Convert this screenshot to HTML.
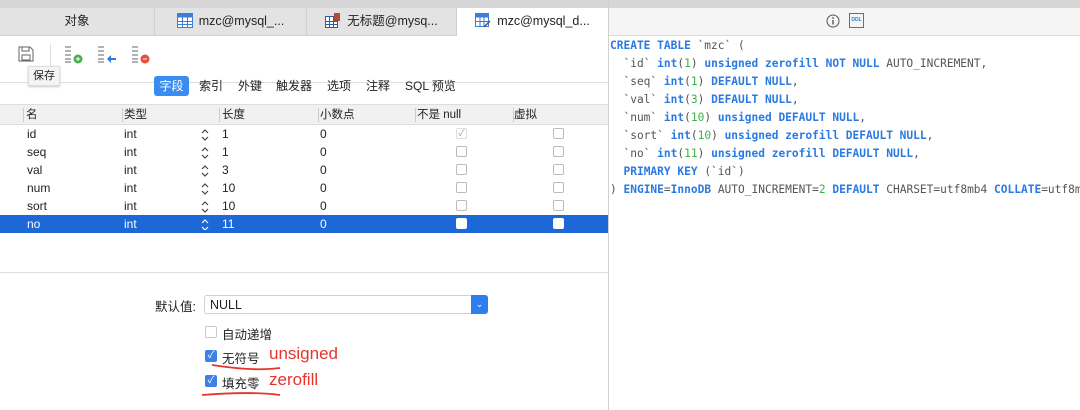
<!DOCTYPE html>
<html><head><meta charset="utf-8"><style>
*{margin:0;padding:0;box-sizing:border-box}
body{width:1080px;height:410px;overflow:hidden;background:#fff;font-family:"Liberation Sans","Noto Sans CJK SC",sans-serif;font-size:12px;color:#222;position:relative}
.abs{position:absolute}
.tab{position:absolute;top:8px;height:28px;background:#e3e3e3;border-right:1px solid #cfcfcf;border-bottom:1px solid #cfcfcf;font-size:12.5px;line-height:27px;text-align:center;color:#222}
.row{position:absolute;left:0;width:608px;height:18px;font-size:12px;line-height:18px}
.row span{position:absolute}
.cb{position:absolute;width:11px;height:11px;border:1px solid #bbb;border-radius:2px;background:#fff}
.code{position:absolute;left:610px;width:470px;overflow:hidden;font-family:"DejaVu Sans Mono",monospace;font-size:11.2px;white-space:pre;color:#555;line-height:18px}
.k{color:#2a7ae2;font-weight:bold}.n{color:#3cb34a}
</style></head><body>
<div class="abs" style="left:0;top:0;width:1080px;height:8px;background:#d6d6d6"></div>
<div class="tab" style="left:0;width:155px">对象</div>
<div class="tab" style="left:155px;width:152px"><svg style="vertical-align:-3px;margin-right:6px" width="16" height="15"><rect x="0.5" y="0.5" width="15" height="14" fill="#fff" stroke="#3b7fd6"/><rect x="0.5" y="0.5" width="15" height="4" fill="#3b7fd6"/><path d="M5.5 4v11M10.5 4v11M0 8.5h16M0 11.5h16" stroke="#3b7fd6"/></svg>mzc@mysql_...</div>
<div class="tab" style="left:307px;width:150px"><svg style="vertical-align:-3px;margin-right:6px" width="16" height="15"><rect x="0.5" y="3.5" width="12" height="11" fill="#fff" stroke="#2b5e9c"/><rect x="9" y="0" width="6" height="8" fill="#b04a3a"/><path d="M4.5 4v11M8.5 4v11M0 8.5h13M0 11.5h13" stroke="#2b5e9c"/></svg>无标题@mysq...</div>
<div class="abs" style="left:457px;top:8px;width:151px;height:28px;background:#fff;font-size:12.5px;line-height:27px;text-align:center"><svg style="vertical-align:-3px;margin-right:6px" width="16" height="15"><rect x="0.5" y="0.5" width="13" height="13" fill="#fff" stroke="#3b7fd6"/><rect x="0.5" y="0.5" width="13" height="4" fill="#3b7fd6"/><path d="M5 4v10M9 4v10M0 8.5h14" stroke="#3b7fd6"/><path d="M9 14l6-6" stroke="#555" stroke-width="1.5"/></svg>mzc@mysql_d...</div>
<div class="abs" style="left:608px;top:0;width:1px;height:410px;background:#d0d0d0"></div>
<div class="abs" style="left:609px;top:8px;width:471px;height:28px;background:#f5f5f5;border-bottom:1px solid #ddd"></div>
<svg class="abs" style="left:826px;top:14px" width="14" height="14"><circle cx="7" cy="7" r="6" fill="none" stroke="#555"/><path d="M7 6v4.5" stroke="#555" stroke-width="1.4"/><circle cx="7" cy="4" r="0.9" fill="#555"/></svg>
<div class="abs" style="left:849px;top:13px;width:15px;height:15px;border:1.5px solid #2a7ae2;font-size:5px;color:#2a7ae2;text-align:center;line-height:12px;font-weight:bold">DDL</div>
<svg class="abs" style="left:18px;top:46px" width="16" height="16"><path d="M1 1h11l3 3v11H1z" fill="#fff" stroke="#666"/><rect x="4" y="1" width="7" height="4" fill="none" stroke="#666"/><rect x="4" y="9" width="8" height="5" fill="none" stroke="#666"/></svg>
<div class="abs" style="left:50px;top:44px;width:1px;height:22px;background:#ddd"></div>
<svg class="abs" style="left:65px;top:46px" width="22" height="18"><path d="M0 1h6M0 5h6M0 9h6M0 13h6M0 16h6" stroke="#999" stroke-width="1.5"/><circle cx="13" cy="13" r="4.5" fill="#4caf50"/><path d="M11 13h4M13 11v4" stroke="#fff"/></svg>
<svg class="abs" style="left:98px;top:46px" width="22" height="18"><path d="M0 1h6M0 5h6M0 9h6M0 13h6M0 16h6" stroke="#999" stroke-width="1.5"/><path d="M9 13l4-4v3h5v2h-5v3z" fill="#2a7ae2"/></svg>
<svg class="abs" style="left:132px;top:46px" width="22" height="18"><path d="M0 1h6M0 5h6M0 9h6M0 13h6M0 16h6" stroke="#999" stroke-width="1.5"/><circle cx="13" cy="13" r="4.5" fill="#e74c3c"/><path d="M11 13h4" stroke="#fff"/></svg>
<div class="abs" style="left:0;top:82px;width:608px;height:1px;background:#ddd"></div>
<div class="abs" style="left:28px;top:66px;width:32px;height:20px;background:#f4f4f4;border:1px solid #ddd;box-shadow:0 1px 2px #ccc;font-size:11px;line-height:18px;text-align:center">保存</div>
<div class="abs" style="left:154px;top:76px;width:35px;height:20px;background:#3b8cf0;color:#fff;border-radius:3px;font-size:12px;line-height:20px;text-align:center">字段</div>
<div class="abs" style="left:199px;top:76px;font-size:12px;line-height:20px">索引</div>
<div class="abs" style="left:238px;top:76px;font-size:12px;line-height:20px">外键</div>
<div class="abs" style="left:276px;top:76px;font-size:12px;line-height:20px">触发器</div>
<div class="abs" style="left:327px;top:76px;font-size:12px;line-height:20px">选项</div>
<div class="abs" style="left:366px;top:76px;font-size:12px;line-height:20px">注释</div>
<div class="abs" style="left:405px;top:76px;font-size:12px;line-height:20px">SQL 预览</div>
<div class="abs" style="left:0;top:104px;width:608px;height:21px;background:#f1f1f1;border-top:1px solid #ddd;border-bottom:1px solid #ddd"></div>
<div class="row" style="top:106px;font-size:11.5px"><span style="left:26px">名</span><span style="left:124px">类型</span><span style="left:222px">长度</span><span style="left:320px">小数点</span><span style="left:417px">不是 null</span><span style="left:514px">虚拟</span></div>
<div class="abs" style="left:23px;top:108px;width:1px;height:14px;background:#ccc"></div>
<div class="abs" style="left:122px;top:108px;width:1px;height:14px;background:#ccc"></div>
<div class="abs" style="left:219px;top:108px;width:1px;height:14px;background:#ccc"></div>
<div class="abs" style="left:318px;top:108px;width:1px;height:14px;background:#ccc"></div>
<div class="abs" style="left:415px;top:108px;width:1px;height:14px;background:#ccc"></div>
<div class="abs" style="left:513px;top:108px;width:1px;height:14px;background:#ccc"></div>
<div class="row" style="top:125px"><span style="left:27px">id</span><span style="left:124px">int</span><span style="left:222px">1</span><span style="left:320px">0</span><div class="cb" style="left:456px;top:3px;border-color:#ddd;color:#999;font-size:9px;line-height:9px;text-align:center">✓</div><div class="cb" style="left:553px;top:3px"></div></div>
<div class="row" style="top:143px"><span style="left:27px">seq</span><span style="left:124px">int</span><span style="left:222px">1</span><span style="left:320px">0</span><div class="cb" style="left:456px;top:3px"></div><div class="cb" style="left:553px;top:3px"></div></div>
<div class="row" style="top:161px"><span style="left:27px">val</span><span style="left:124px">int</span><span style="left:222px">3</span><span style="left:320px">0</span><div class="cb" style="left:456px;top:3px"></div><div class="cb" style="left:553px;top:3px"></div></div>
<div class="row" style="top:179px"><span style="left:27px">num</span><span style="left:124px">int</span><span style="left:222px">10</span><span style="left:320px">0</span><div class="cb" style="left:456px;top:3px"></div><div class="cb" style="left:553px;top:3px"></div></div>
<div class="row" style="top:197px"><span style="left:27px">sort</span><span style="left:124px">int</span><span style="left:222px">10</span><span style="left:320px">0</span><div class="cb" style="left:456px;top:3px"></div><div class="cb" style="left:553px;top:3px"></div></div>
<div class="row" style="top:215px;background:#1b68d6;color:#fff"><span style="left:27px">no</span><span style="left:124px">int</span><span style="left:222px">11</span><span style="left:320px">0</span><div class="cb" style="left:456px;top:3px;border-color:#fff"></div><div class="cb" style="left:553px;top:3px;border-color:#fff"></div></div>
<svg class="abs" style="left:200px;top:128px" width="10" height="102"><g fill="none" stroke="#444" stroke-width="1.2"><path d="M2 5l3-3 3 3M2 9l3 3 3-3"/><path d="M2 23l3-3 3 3M2 27l3 3 3-3"/><path d="M2 41l3-3 3 3M2 45l3 3 3-3"/><path d="M2 59l3-3 3 3M2 63l3 3 3-3"/><path d="M2 77l3-3 3 3M2 81l3 3 3-3"/><path d="M2 95l3-3 3 3M2 99l3 3 3-3" stroke="#fff"/></g></svg>
<div class="abs" style="left:0;top:272px;width:608px;height:1px;background:#ddd"></div>
<div class="abs" style="left:155px;top:296px;font-size:12.5px">默认值:</div>
<div class="abs" style="left:204px;top:295px;width:284px;height:19px;border:1px solid #d0d0d0;border-radius:3px;font-size:12.5px;line-height:18px;padding-left:5px">NULL</div>
<div class="abs" style="left:471px;top:295px;width:17px;height:19px;background:#2f7ef0;border-radius:0 3px 3px 0;color:#fff;font-size:9px;text-align:center;line-height:18px">⌄</div>
<div class="cb" style="left:205px;top:326px;width:12px;height:12px;border-color:#c8c8c8"></div>
<div class="abs" style="left:222px;top:324px;font-size:12.5px">自动递增</div>
<div class="cb" style="left:205px;top:350px;width:12px;height:12px;background:#3b82e8;border-color:#3b82e8;color:#fff;font-size:10px;line-height:10px;text-align:center">✓</div>
<div class="abs" style="left:222px;top:348px;font-size:12.5px">无符号</div>
<div class="abs" style="left:269px;top:344px;font-size:17px;color:#e8342a">unsigned</div>
<div class="cb" style="left:205px;top:375px;width:12px;height:12px;background:#3b82e8;border-color:#3b82e8;color:#fff;font-size:10px;line-height:10px;text-align:center">✓</div>
<div class="abs" style="left:222px;top:373px;font-size:12.5px">填充零</div>
<div class="abs" style="left:269px;top:370px;font-size:17px;color:#e8342a">zerofill</div>
<svg class="abs" style="left:200px;top:360px" width="90" height="40"><path d="M12 5c20 3 45 6 68 3" stroke="#e8342a" stroke-width="1.8" fill="none"/><path d="M2 35c25-2 55-3 78 0" stroke="#e8342a" stroke-width="1.8" fill="none"/></svg>
<div class="code" style="top:37px"><span class="k">CREATE TABLE</span> `mzc` (
  `id` <span class="k">int</span>(<span class="n">1</span>) <span class="k">unsigned zerofill NOT NULL</span> AUTO_INCREMENT,
  `seq` <span class="k">int</span>(<span class="n">1</span>) <span class="k">DEFAULT NULL</span>,
  `val` <span class="k">int</span>(<span class="n">3</span>) <span class="k">DEFAULT NULL</span>,
  `num` <span class="k">int</span>(<span class="n">10</span>) <span class="k">unsigned DEFAULT NULL</span>,
  `sort` <span class="k">int</span>(<span class="n">10</span>) <span class="k">unsigned zerofill DEFAULT NULL</span>,
  `no` <span class="k">int</span>(<span class="n">11</span>) <span class="k">unsigned zerofill DEFAULT NULL</span>,
  <span class="k">PRIMARY KEY</span> (`id`)
) <span class="k">ENGINE</span>=<span class="k">InnoDB</span> AUTO_INCREMENT=<span class="n">2</span> <span class="k">DEFAULT</span> CHARSET=utf8mb4 <span class="k">COLLATE</span>=utf8mb4_0900_ai_ci</div>
</body></html>
